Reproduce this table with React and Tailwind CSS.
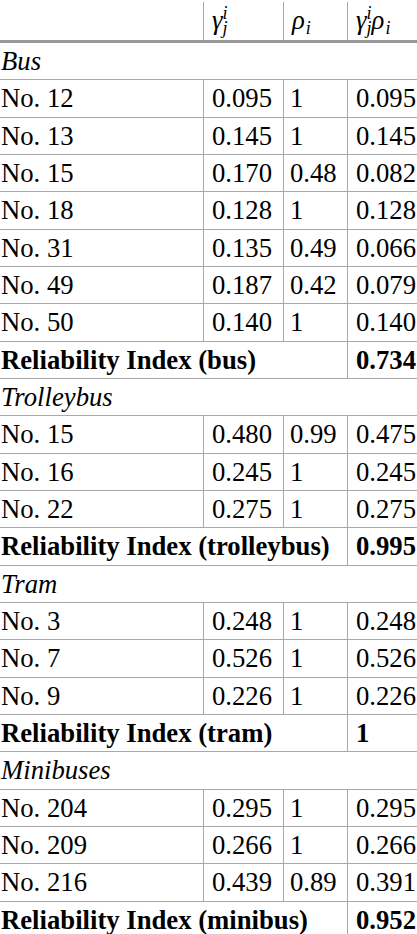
import React from 'react';

const sections = [
  {
    name: 'Bus',
    rows: [
      ['No. 12', '0.095', '1', '0.095'],
      ['No. 13', '0.145', '1', '0.145'],
      ['No. 15', '0.170', '0.48', '0.082'],
      ['No. 18', '0.128', '1', '0.128'],
      ['No. 31', '0.135', '0.49', '0.066'],
      ['No. 49', '0.187', '0.42', '0.079'],
      ['No. 50', '0.140', '1', '0.140'],
    ],
    total: ['Reliability Index (bus)', '0.734'],
  },
  {
    name: 'Trolleybus',
    rows: [
      ['No. 15', '0.480', '0.99', '0.475'],
      ['No. 16', '0.245', '1', '0.245'],
      ['No. 22', '0.275', '1', '0.275'],
    ],
    total: ['Reliability Index (trolleybus)', '0.995'],
  },
  {
    name: 'Tram',
    rows: [
      ['No. 3', '0.248', '1', '0.248'],
      ['No. 7', '0.526', '1', '0.526'],
      ['No. 9', '0.226', '1', '0.226'],
    ],
    total: ['Reliability Index (tram)', '1'],
  },
  {
    name: 'Minibuses',
    rows: [
      ['No. 204', '0.295', '1', '0.295'],
      ['No. 209', '0.266', '1', '0.266'],
      ['No. 216', '0.439', '0.89', '0.391'],
    ],
    total: ['Reliability Index (minibus)', '0.952'],
  },
];

function Gamma() {
  return (
    <>
      <span className="italic">γ</span>
      <sup className="italic text-[18px] top-[-10px]">i</sup>
      <sub className="italic text-[18px] bottom-[-5px] -ml-[5px]">j</sub>
    </>
  );
}

function Rho() {
  return (
    <>
      <span className="italic">ρ</span>
      <sub className="italic text-[18px] bottom-[-5px] ml-[1px]">i</sub>
    </>
  );
}

function DataRow({ row }) {
  return (
    <div className="flex h-[37.33px] border-b border-[#a9a9a9] leading-[37px]">
      <div className="w-[204px] shrink-0 border-r border-[#a9a9a9] pl-[1px]">{row[0]}</div>
      <div className="w-[80px] shrink-0 border-r border-[#a9a9a9] pl-[8px]">{row[1]}</div>
      <div className="w-[64px] shrink-0 border-r border-[#a9a9a9] pl-[6px]">{row[2]}</div>
      <div className="w-[120px] shrink-0 border-r border-[#a9a9a9] pl-[8px]">{row[3]}</div>
    </div>
  );
}

export default function App() {
  return (
    <div className="w-[417px] h-[934px] overflow-hidden bg-white text-black font-['Liberation_Serif','Times_New_Roman',serif] text-[26.7px]">
      <div className="w-[520px]">
        <div className="flex h-[40px] leading-[37px] pt-[2px]">
          <div className="w-[204px] shrink-0 border-r border-[#a9a9a9]" />
          <div className="w-[80px] shrink-0 border-r border-[#a9a9a9] pl-[8px]">
            <Gamma />
          </div>
          <div className="w-[64px] shrink-0 border-r border-[#a9a9a9] pl-[8px]">
            <Rho />
          </div>
          <div className="w-[120px] shrink-0 border-r border-[#a9a9a9] pl-[8px]">
            <Gamma />
            <Rho />
          </div>
        </div>
        <div className="h-[3px] bg-[#999999]" />
        {sections.map((s) => (
          <div key={s.name}>
            <div className="h-[37.33px] border-b border-[#a9a9a9] leading-[37px] italic pl-[1px]">{s.name}</div>
            {s.rows.map((r, i) => (
              <DataRow key={i} row={r} />
            ))}
            <div className="flex h-[37.33px] border-b border-[#a9a9a9] leading-[37px] font-bold">
              <div className="w-[348px] shrink-0 border-r border-[#a9a9a9] pl-[1px]">{s.total[0]}</div>
              <div className="w-[120px] shrink-0 border-r border-[#a9a9a9] pl-[8px]">{s.total[1]}</div>
            </div>
          </div>
        ))}
      </div>
    </div>
  );
}
